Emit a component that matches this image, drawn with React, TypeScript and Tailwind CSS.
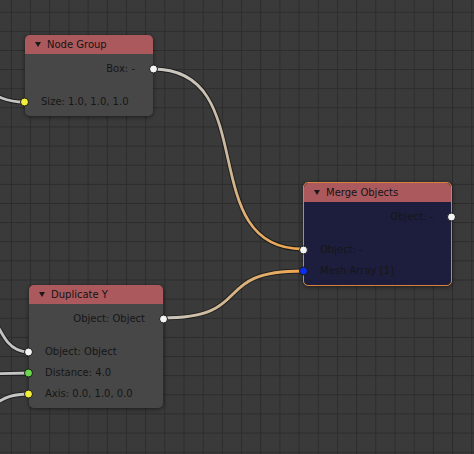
// Node editor canvas: three nodes on a grid, links drawn in one svg behind them.
type Socket = { label: string; color: string };

interface NodeProps {
  title: string;
  x: number;
  y: number;
  w: number;
  outputs: Socket[];
  inputs: Socket[];
  selected?: boolean;
}

const WHITE = '#f4f4f4';
const YELLOW = '#f2ee3c';
const GREEN = '#6ad84a';
const BLUE = '#0b2cf2';

function Dot({ color, side }: { color: string; side: 'left' | 'right' }) {
  return (
    <span
      className={
        'absolute top-1/2 -translate-y-1/2 w-[9px] h-[9px] rounded-full border border-[#1a1a1a] ' +
        (side === 'left' ? 'left-[-5px]' : 'right-[-5px]')
      }
      style={{ backgroundColor: color }}
    />
  );
}

function Node({ title, x, y, w, outputs, inputs, selected }: NodeProps) {
  return (
    <div
      className={
        'absolute rounded-[5px] shadow-[0_1px_4px_rgba(0,0,0,0.55)] ' +
        (selected ? 'border border-[#d9823f]' : '')
      }
      style={{ left: x, top: y, width: w }}
    >
      <div className="flex h-[19px] items-center gap-[6px] rounded-t-[5px] bg-[#ab595d] pl-[10px] text-[10px] text-[#141414]">
        <svg width="6" height="5" viewBox="0 0 6 5" className="shrink-0">
          <path d="M0 0 L6 0 L3 5 Z" fill="#1a1a1a" />
        </svg>
        <span>{title}</span>
      </div>
      <div
        className={
          'flex flex-col rounded-b-[5px] pt-[4px] pb-[4px] text-[10px] text-[#161616] ' +
          (selected ? 'bg-[rgba(27,28,62,0.93)]' : 'bg-[#474747]')
        }
      >
        {outputs.map((s) => (
          <div key={s.label} className="relative flex h-[21px] items-center justify-end pr-[18px]">
            {s.label}
            <Dot color={s.color} side="right" />
          </div>
        ))}
        <div className="h-[12px]" />
        {inputs.map((s) => (
          <div key={s.label} className="relative flex h-[21px] items-center pl-[16px]">
            {s.label}
            <Dot color={s.color} side="left" />
          </div>
        ))}
      </div>
    </div>
  );
}

const LINKS = {
  size: 'M -80 70 C -10 70 -20 102 25 102',
  object: 'M -35 265 C 0 320 0 352 29 352',
  distance: 'M -20 374 L 29 373',
  axis: 'M -40 415 C 0 410 -5 394 29 394',
  box: 'M 153 69 C 263 69 193 249 303 249',
  dup: 'M 162 318 C 257 318 208 271 303 271',
};

function Wires() {
  const plain = '#c4c4c4';
  return (
    <svg className="absolute inset-0" width="474" height="454">
      <defs>
        <pattern id="grid" x="10.9" y="11.7" width="19.18" height="19.13" patternUnits="userSpaceOnUse">
          <rect width="19.18" height="19.13" fill="#3a3a3a" />
          <rect width="1" height="19.13" fill="#2c2c2c" />
          <rect width="19.18" height="1" fill="#2c2c2c" />
        </pattern>
        <linearGradient id="g1" gradientUnits="userSpaceOnUse" x1="153" y1="69" x2="303" y2="249">
          <stop offset="0" stopColor="#cbc8c3" />
          <stop offset="0.45" stopColor="#c9b89f" />
          <stop offset="1" stopColor="#f0a64c" />
        </linearGradient>
        <linearGradient id="g2" gradientUnits="userSpaceOnUse" x1="162" y1="318" x2="303" y2="271">
          <stop offset="0" stopColor="#cbc8c3" />
          <stop offset="0.45" stopColor="#d2b68e" />
          <stop offset="1" stopColor="#f0a64c" />
        </linearGradient>
      </defs>
      <rect width="474" height="454" fill="url(#grid)" />

      <g fill="none" strokeLinecap="round">
        {Object.values(LINKS).map((d) => (
          <path key={d} d={d} stroke="rgba(0,0,0,0.45)" strokeWidth="4.8" />
        ))}
        <path d={LINKS.size} stroke={plain} strokeWidth="2.8" />
        <path d={LINKS.object} stroke={plain} strokeWidth="2.8" />
        <path d={LINKS.distance} stroke={plain} strokeWidth="2.8" />
        <path d={LINKS.axis} stroke={plain} strokeWidth="2.8" />
        <path d={LINKS.box} stroke="url(#g1)" strokeWidth="2.8" />
        <path d={LINKS.dup} stroke="url(#g2)" strokeWidth="2.8" />
      </g>
    </svg>
  );
}

export default function App() {
  return (
    <div className="relative h-[454px] w-[474px] overflow-hidden bg-[#3a3a3a] font-['DejaVu_Sans',sans-serif]">
      <Wires />
      <Node
        title="Node Group"
        x={25}
        y={35}
        w={128}
        outputs={[{ label: 'Box: -', color: WHITE }]}
        inputs={[{ label: 'Size: 1.0, 1.0, 1.0', color: YELLOW }]}
      />
      <Node
        title="Merge Objects"
        x={303}
        y={182}
        w={149}
        selected
        outputs={[{ label: 'Object: -', color: WHITE }]}
        inputs={[
          { label: 'Object: -', color: WHITE },
          { label: 'Mesh Array [1]', color: BLUE },
        ]}
      />
      <Node
        title="Duplicate Y"
        x={29}
        y={285}
        w={134}
        outputs={[{ label: 'Object: Object', color: WHITE }]}
        inputs={[
          { label: 'Object: Object', color: WHITE },
          { label: 'Distance: 4.0', color: GREEN },
          { label: 'Axis: 0.0, 1.0, 0.0', color: YELLOW },
        ]}
      />
    </div>
  );
}
